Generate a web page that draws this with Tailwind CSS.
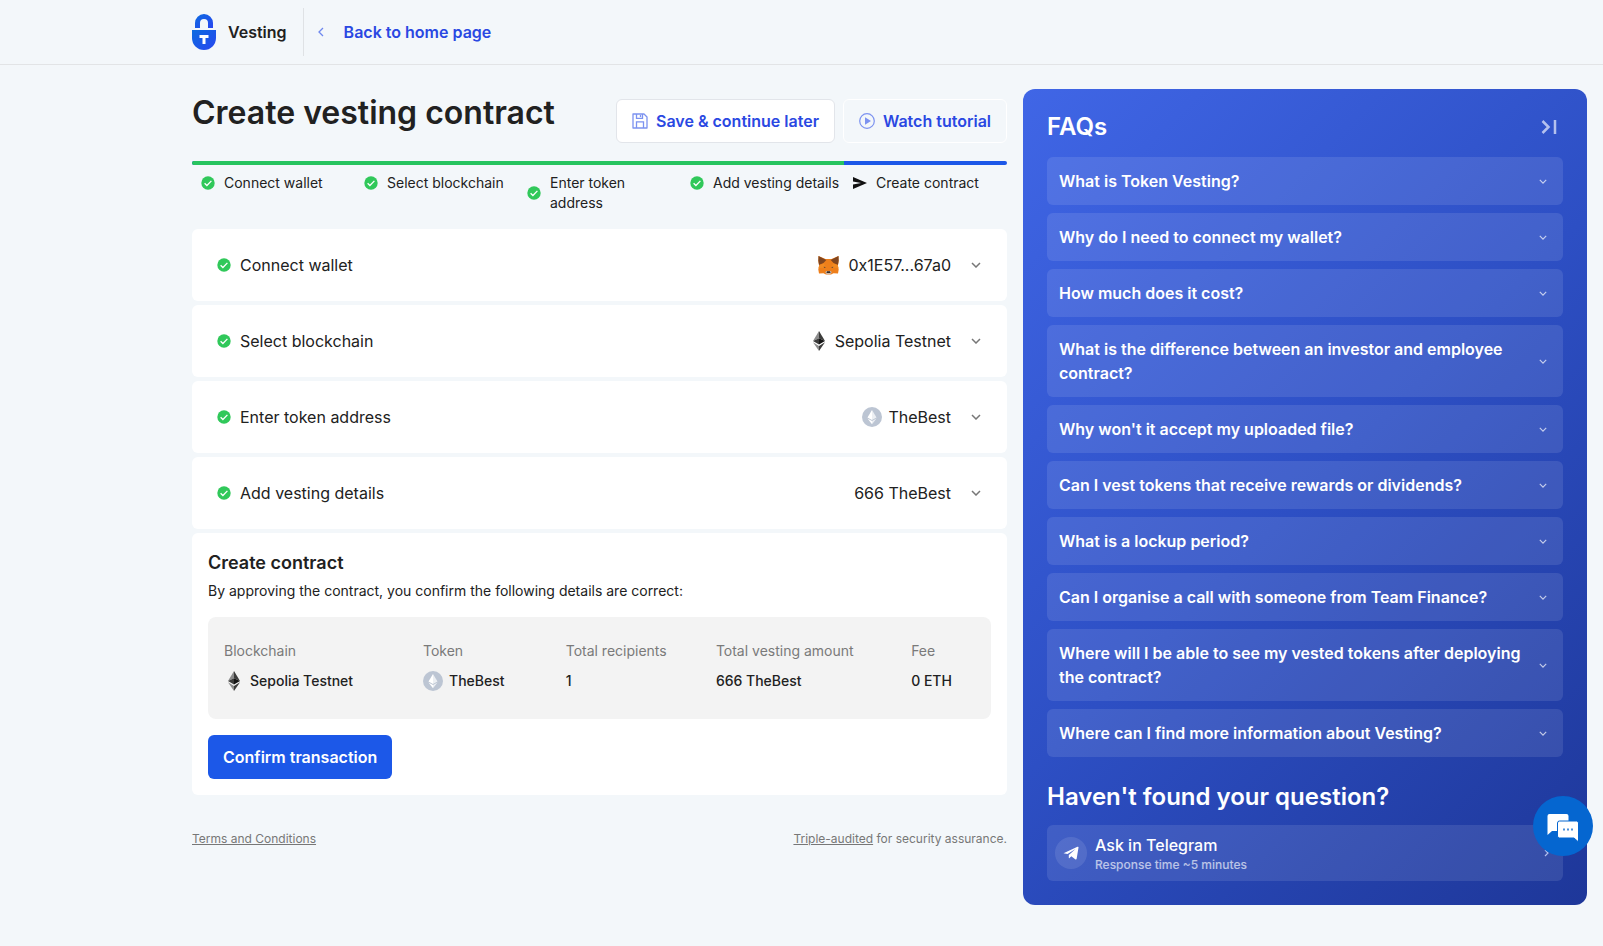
<!DOCTYPE html>
<html lang="en">
<head>
    <meta charset="UTF-8">
    <meta name="viewport" content="width=device-width, initial-scale=1.0">
    <title>Create vesting contract</title>
    <script src="https://cdn.jsdelivr.net/npm/@tailwindcss/browser@4"></script>
</head>
<body class="min-h-screen bg-[#f3f7fa] font-['Inter',sans-serif] text-[#212121]">
    <!-- Shared icons -->
    <svg class="hidden">
        <symbol id="check" viewBox="0 0 14 14">
            <circle cx="7" cy="7" r="6.7" fill="#30c85a"/>
            <path d="M3.6 7.3l2.3 2.2 4.5-4.6" fill="none" stroke="#fff" stroke-width="1.3"/>
        </symbol>
        <symbol id="chevron-down" viewBox="0 0 10 6">
            <path d="M1 1l4 4 4-4" fill="none" stroke="currentColor" stroke-width="1.5"/>
        </symbol>
        <symbol id="eth" viewBox="0 0 20 20">
            <path d="M10 0L4 10l6-2.7z" fill="#8c8c8c"/>
            <path d="M10 0l6 10-6-2.7z" fill="#3c3c3b"/>
            <path d="M4 10l6-2.7v6.2z" fill="#3c3c3b"/>
            <path d="M16 10l-6-2.7v6.2z" fill="#141414"/>
            <path d="M4 11.3l6 3.6V20z" fill="#8c8c8c"/>
            <path d="M16 11.3l-6 3.6V20z" fill="#3c3c3b"/>
        </symbol>
        <symbol id="token" viewBox="0 0 20 20">
            <circle cx="10" cy="10" r="10" fill="#bcc5d3"/>
            <path d="M10 3l-4.5 7.4L10 13z" fill="#fff"/>
            <path d="M10 3l4.500 7.4L10 13z" fill="#eceff3"/>
            <path d="M5.500 11.400L10 14v3.200z" fill="#fff"/>
            <path d="M14.500 11.400L10 14v3.200z" fill="#eceff3"/>
        </symbol>
        <symbol id="fox" viewBox="0 0 21 19">
            <path d="M.5.5L7.500 3.500h6L20.500.5v6l-.7 3.500.9 4-.7 4-4.500-.3-2.500 1.300h-5L5.500 17.700 1 18 .3 14l.9-4-.7-3.500z" fill="#ee7f1b"/>
            <path d="M.5.5L8.300 4.500 5.500 7.500 1 9.500.3 5z" fill="#80451f"/>
            <path d="M20.500.5l-7.800 4 2.800 3L20 9.500l.7-4.500z" fill="#80451f"/>
            <path d="M1.200 9.500L6 8l1.500 4-7 .8zM19.800 9.500L15 8l-1.500 4 7 .8z" fill="#f28a22"/>
            <path d="M5.800 11l2.200.9-2 .5zM15.200 11l-2.200.9 2 .5z" fill="#6b4a35"/>
            <path d="M8 15.500h5l.7 1.800-1.700 1.500H9l-1.700-1.500z" fill="#c9b8aa"/>
            <path d="M9 15.800h3l.5 1.700h-4z" fill="#3a2c26"/>
        </symbol>
    </svg>

    <!-- Header -->
    <header class="flex h-[65px] items-center border-b border-[#e2e4e6] pl-48">
        <svg class="h-9 w-6" viewBox="0 0 24 36">
            <defs>
                <linearGradient id="lock" x1="0" y1="0" x2="1" y2="1">
                    <stop offset="0" stop-color="#0c6ce0"/>
                    <stop offset="1" stop-color="#2846f0"/>
                </linearGradient>
            </defs>
            <path d="M3 14V9a9 9 0 0 1 18 0v5h-5V9a4 4 0 0 0-8 0v5z" fill="url(#lock)"/>
            <path d="M0 16h24v8a12 12 0 0 1-24 0z" fill="url(#lock)"/>
            <path d="M7.500 21h9v3h-3v6h-3v-6h-3z" fill="#fff"/>
        </svg>
        <span class="ml-3 font-semibold">Vesting</span>
        <span class="ml-4 h-12 w-px bg-[#dfe2e5]"></span>
        <a href="#" class="ml-3 flex items-center font-semibold text-[#2a48e2]">
            <svg class="ml-0.5 mr-5 h-2.5 w-1.5" viewBox="0 0 6 10"><path d="M5 1L1 5l4 4" fill="none" stroke="#6f88ee" stroke-width="1.3"/></svg>
            Back to home page
        </a>
    </header>

    <div class="grid grid-cols-[minmax(0,815fr)_minmax(0,564fr)] items-start gap-4 pt-6 pr-4 pl-48">
        <main>
            <div class="flex items-start justify-between">
                <h1 class="text-[32px] leading-[48px] font-semibold">Create vesting contract</h1>
                <div class="mt-2.5 flex gap-2">
                    <button class="flex h-11 items-center rounded-md border border-[#e2e5ea] bg-white px-[15px] font-semibold text-[#2a48e2]">
                        <svg class="mr-2 h-4 w-4" viewBox="0 0 16 16" fill="none" stroke="#7c92f0" stroke-width="1.3">
                            <path d="M1 1h11l3 3v11H1z" stroke-linejoin="round"/>
                            <path d="M4.500 1v4.300h6V1M4.500 15V8.800h7V15M8.500 2v2"/>
                        </svg>
                        Save &amp; continue later
                    </button>
                    <button class="flex h-11 items-center rounded-md border border-white px-[15px] font-semibold text-[#2a48e2]">
                        <svg class="mr-2 h-4 w-4" viewBox="0 0 16 16">
                            <circle cx="8" cy="8" r="7.300" fill="none" stroke="#7c92f0" stroke-width="1.200"/>
                            <path d="M6 4.200v7.600L12 8z" fill="#7c92f0"/>
                        </svg>
                        Watch tutorial
                    </button>
                </div>
            </div>

            <!-- Progress -->
            <div class="mt-[18px] flex h-1 overflow-hidden rounded-full bg-[#1c58e8]">
                <div class="w-4/5 bg-[#27c45f]"></div>
            </div>
            <ol class="grid grid-cols-5 pt-2 pb-4 text-sm">
                <li class="flex items-start gap-2 pr-1 pl-2"><svg class="mt-[3px] h-3.5 w-4 shrink-0"><use href="#check"/></svg>Connect wallet</li>
                <li class="flex items-start gap-2 pr-1 pl-2"><svg class="mt-[3px] h-3.5 w-4 shrink-0"><use href="#check"/></svg>Select blockchain</li>
                <li class="flex items-center gap-2 pr-1 pl-2"><svg class="h-3.5 w-4 shrink-0"><use href="#check"/></svg>Enter token address</li>
                <li class="flex items-start gap-2 pr-1 pl-2"><svg class="mt-[3px] h-3.5 w-4 shrink-0"><use href="#check"/></svg><span class="whitespace-nowrap">Add vesting details</span></li>
                <li class="flex items-start gap-2 pr-1 pl-2"><svg class="mt-1 h-3 w-4 shrink-0" viewBox="0 0 16 12"><path d="M1 0l14 6-14 6V7.500L9 6 1 4.500z" fill="#111"/></svg>Create contract</li>
            </ol>

            <!-- Completed steps -->
            <div class="flex flex-col gap-1">
                <button class="flex h-[72px] items-center rounded-md bg-white px-6">
                    <svg class="mr-2 h-3.5 w-4"><use href="#check"/></svg>
                    <span>Connect wallet</span>
                    <svg class="mr-2.5 ml-auto h-5 w-[21px]"><use href="#fox"/></svg>
                    <span>0x1E57...67a0</span>
                    <svg class="mr-0.5 ml-5 h-1.5 w-2.5 text-[#777]"><use href="#chevron-down"/></svg>
                </button>
                <button class="flex h-[72px] items-center rounded-md bg-white px-6">
                    <svg class="mr-2 h-3.5 w-4"><use href="#check"/></svg>
                    <span>Select blockchain</span>
                    <svg class="mr-1.5 ml-auto h-5 w-5"><use href="#eth"/></svg>
                    <span>Sepolia Testnet</span>
                    <svg class="mr-0.5 ml-5 h-1.5 w-2.5 text-[#777]"><use href="#chevron-down"/></svg>
                </button>
                <button class="flex h-[72px] items-center rounded-md bg-white px-6">
                    <svg class="mr-2 h-3.5 w-4"><use href="#check"/></svg>
                    <span>Enter token address</span>
                    <svg class="mr-1.5 ml-auto h-5 w-5"><use href="#token"/></svg>
                    <span>TheBest</span>
                    <svg class="mr-0.5 ml-5 h-1.5 w-2.5 text-[#777]"><use href="#chevron-down"/></svg>
                </button>
                <button class="flex h-[72px] items-center rounded-md bg-white px-6">
                    <svg class="mr-2 h-3.5 w-4"><use href="#check"/></svg>
                    <span>Add vesting details</span>
                    <span class="ml-auto">666 TheBest</span>
                    <svg class="mr-0.5 ml-5 h-1.5 w-2.5 text-[#777]"><use href="#chevron-down"/></svg>
                </button>
            </div>

            <!-- Create contract -->
            <section class="mt-1 rounded-md bg-white p-4">
                <h2 class="text-lg leading-7 font-semibold">Create contract</h2>
                <p class="mt-1 text-sm">By approving the contract, you confirm the following details are correct:</p>
                <div class="mt-4 rounded-lg bg-[#f3f3f3] px-4 pt-6 pb-6">
                    <table class="w-full table-fixed text-left text-sm">
                        <thead>
                            <tr class="h-5 text-[#7a7a7a]">
                                <th class="w-[26.5%] font-normal">Blockchain</th>
                                <th class="w-[19%] font-normal">Token</th>
                                <th class="w-[20%] font-normal">Total recipients</th>
                                <th class="w-[26%] font-normal">Total vesting amount</th>
                                <th class="font-normal">Fee</th>
                            </tr>
                        </thead>
                        <tbody>
                            <tr class="h-[34px] align-bottom font-medium">
                                <td class="pb-1"><span class="flex items-center gap-1.5"><svg class="h-5 w-5"><use href="#eth"/></svg>Sepolia Testnet</span></td>
                                <td class="pb-1"><span class="flex items-center gap-1.5"><svg class="h-5 w-5"><use href="#token"/></svg>TheBest</span></td>
                                <td class="pb-1">1</td>
                                <td class="pb-1">666 TheBest</td>
                                <td class="pb-1">0 ETH</td>
                            </tr>
                        </tbody>
                    </table>
                </div>
                <button class="mt-4 h-11 rounded-md bg-[#1c58e8] px-[15px] font-semibold text-white">Confirm transaction</button>
            </section>

            <footer class="flex justify-between pt-9 text-xs text-[#777]">
                <a href="#" class="underline">Terms and Conditions</a>
                <p><a href="#" class="underline">Triple-audited</a> for security assurance.</p>
            </footer>
        </main>

        <!-- FAQs -->
        <aside class="rounded-xl bg-linear-135 from-[#4066e6] via-[#2d4fc4] to-[#1e3799] p-6 text-white">
            <div class="flex h-7 items-center justify-between">
                <h2 class="text-2xl leading-7 font-semibold">FAQs</h2>
                <button aria-label="Collapse" class="mr-1.5">
                    <svg class="h-4 w-4" viewBox="0 0 16 16" fill="none" stroke="#b4c1ee" stroke-width="2.500"><path d="M1.500 2l6 6-6 6M14 1v14"/></svg>
                </button>
            </div>
            <div class="mt-4 flex flex-col gap-2 font-semibold">
                <button class="flex items-center justify-between rounded-md bg-white/10 p-3 text-left">What is Token Vesting?<svg class="mr-1 h-[5px] w-2 shrink-0 text-white/70"><use href="#chevron-down"/></svg></button>
                <button class="flex items-center justify-between rounded-md bg-white/10 p-3 text-left">Why do I need to connect my wallet?<svg class="mr-1 h-[5px] w-2 shrink-0 text-white/70"><use href="#chevron-down"/></svg></button>
                <button class="flex items-center justify-between rounded-md bg-white/10 p-3 text-left">How much does it cost?<svg class="mr-1 h-[5px] w-2 shrink-0 text-white/70"><use href="#chevron-down"/></svg></button>
                <button class="flex items-center justify-between rounded-md bg-white/10 p-3 text-left"><span class="pr-4">What is the difference between an investor and employee contract?</span><svg class="mr-1 h-[5px] w-2 shrink-0 text-white/70"><use href="#chevron-down"/></svg></button>
                <button class="flex items-center justify-between rounded-md bg-white/10 p-3 text-left">Why won't it accept my uploaded file?<svg class="mr-1 h-[5px] w-2 shrink-0 text-white/70"><use href="#chevron-down"/></svg></button>
                <button class="flex items-center justify-between rounded-md bg-white/10 p-3 text-left">Can I vest tokens that receive rewards or dividends?<svg class="mr-1 h-[5px] w-2 shrink-0 text-white/70"><use href="#chevron-down"/></svg></button>
                <button class="flex items-center justify-between rounded-md bg-white/10 p-3 text-left">What is a lockup period?<svg class="mr-1 h-[5px] w-2 shrink-0 text-white/70"><use href="#chevron-down"/></svg></button>
                <button class="flex items-center justify-between rounded-md bg-white/10 p-3 text-left">Can I organise a call with someone from Team Finance?<svg class="mr-1 h-[5px] w-2 shrink-0 text-white/70"><use href="#chevron-down"/></svg></button>
                <button class="flex items-center justify-between rounded-md bg-white/10 p-3 text-left"><span class="pr-3">Where will I be able to see my vested tokens after deploying the contract?</span><svg class="mr-1 h-[5px] w-2 shrink-0 text-white/70"><use href="#chevron-down"/></svg></button>
                <button class="flex items-center justify-between rounded-md bg-white/10 p-3 text-left">Where can I find more information about Vesting?<svg class="mr-1 h-[5px] w-2 shrink-0 text-white/70"><use href="#chevron-down"/></svg></button>
            </div>
            <h2 class="mt-6 mb-3 text-2xl leading-8 font-semibold">Haven't found your question?</h2>
            <a href="#" class="flex h-14 items-center rounded-md bg-white/10 px-2">
                <span class="mr-2 flex h-8 w-8 items-center justify-center rounded-full bg-white/10">
                    <svg class="h-4 w-4" viewBox="0 0 16 16" fill="#fff"><path d="M.5 8.200L14.500 1.800q1.200-.4 1 .8l-1.800 11q-.3 1.300-1.500.6L8.300 11.300 6.500 13.100q-.6.400-.7-.4V9.900L12.500 4 4.500 9z"/></svg>
                </span>
                <span>
                    <span class="block leading-6 font-medium">Ask in Telegram</span>
                    <span class="block text-xs leading-4 font-medium text-white/65">Response time ~5 minutes</span>
                </span>
                <svg class="mr-1.5 ml-auto h-2 w-[5px]" viewBox="0 0 5 8"><path d="M1 1l3 3-3 3" fill="none" stroke="#b4c1ee" stroke-width="1.200"/></svg>
            </a>
        </aside>
    </div>

    <!-- Chat launcher -->
    <button aria-label="Open chat" class="fixed right-2.5 bottom-[90px] flex h-[60px] w-[60px] items-center justify-center rounded-full bg-[#0566d0]">
        <svg class="mt-1 h-7 w-8" viewBox="0 0 32 28">
            <path d="M2.500 0h17a2 2 0 0 1 2 2v13a2 2 0 0 1-2 2H5l-4.500 4V2a2 2 0 0 1 2-2z" fill="#fff"/>
            <path d="M12.500 7h17a2 2 0 0 1 2 2v19l-4.500-4H12.500a2 2 0 0 1-2-2V9a2 2 0 0 1 2-2z" fill="#fff" stroke="#0566d0" stroke-width="1"/>
            <path d="M16 14.500h2v2h-2zM20 14.500h2v2h-2zM24 14.500h2v2h-2z" fill="#4a8fdc"/>
        </svg>
    </button>
</body>
</html>
